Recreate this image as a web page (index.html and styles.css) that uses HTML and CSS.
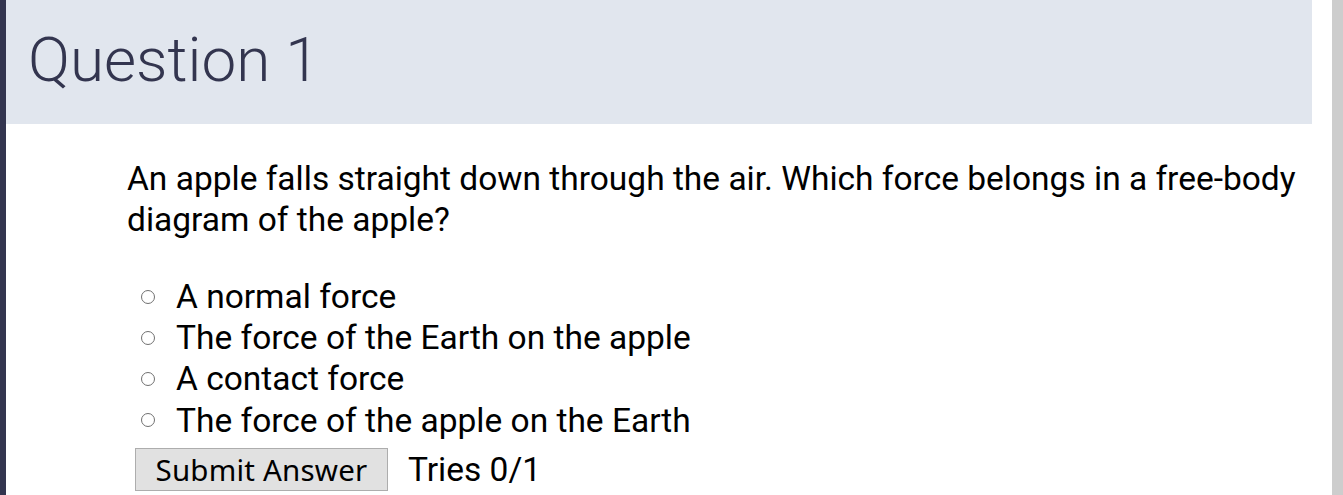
FILE: index.html
```html
<!DOCTYPE html>
<html>
<head>
<meta charset="utf-8">
<link rel="stylesheet" href="styles.css">
</head>
<body>
<div class="page">
  <div class="leftbar"></div>
  <main class="main">
    <header class="qhead">
      <h1 class="qtitle">Question 1</h1>
    </header>
    <section class="qbody">
      <p class="prompt">An apple falls straight down through the air. Which force belongs in a free-body diagram of the apple?</p>
      <ul class="choices">
        <li class="choice"><span class="radio"></span><span>A normal force</span></li>
        <li class="choice"><span class="radio"></span><span>The force of the Earth on the apple</span></li>
        <li class="choice"><span class="radio"></span><span>A contact force</span></li>
        <li class="choice"><span class="radio"></span><span>The force of the apple on the Earth</span></li>
      </ul>
      <div class="actions">
        <button class="submit" type="button">Submit Answer</button>
        <span class="tries">Tries 0/1</span>
      </div>
    </section>
  </main>
  <div class="rightbar"></div>
</div>
</body>
</html>
```

FILE: styles.css
```css
html, body {
  margin: 0;
  padding: 0;
  background: #ffffff;
  overflow: hidden;
}
body {
  font-family: Roboto, "Liberation Sans", sans-serif;
  color: #000;
}
.page {
  display: flex;
  height: 495px;
}
.leftbar {
  width: 6px;
  flex: none;
  background: #33354f;
}
.main {
  flex: 1;
  min-width: 0;
  margin-right: 20px;
}
.rightbar {
  width: 11px;
  flex: none;
  background: #cdcdcd;
}
.qhead {
  background: #e1e6ee;
  height: 124px;
  box-sizing: border-box;
  padding: 20px 0 0 22px;
}
.qtitle {
  margin: 0;
  font-family: Roboto, sans-serif;
  font-weight: 300;
  font-size: 62px;
  line-height: 80px;
  letter-spacing: 0;
  color: #33354f;
}
.qbody {
  padding: 33.5px 0 0 121px;
}
.prompt {
  margin: 0;
  font-size: 33.5px;
  line-height: 41px;
}
.choices {
  list-style: none;
  margin: 36.4px 0 0 0;
  padding: 0 0 0 14px;
}
.choice {
  display: flex;
  align-items: center;
  font-size: 33.5px;
  line-height: 41.3px;
}
.radio {
  width: 12px;
  height: 12px;
  border: 1px solid #707070;
  border-radius: 50%;
  margin-right: 21px;
  flex: none;
}
.actions {
  display: flex;
  align-items: center;
  margin-top: 7px;
  padding-left: 8px;
  gap: 20px;
}
.submit {
  width: 253px;
  height: 43px;
  background: #e1e1e1;
  border: 1px solid #adadad;
  border-radius: 0;
  font-family: "Noto Sans", "Open Sans", sans-serif;
  font-size: 29.5px;
  letter-spacing: 0.2px;
  color: #000;
  padding: 0;
}
.tries {
  font-size: 33.5px;
}
```
